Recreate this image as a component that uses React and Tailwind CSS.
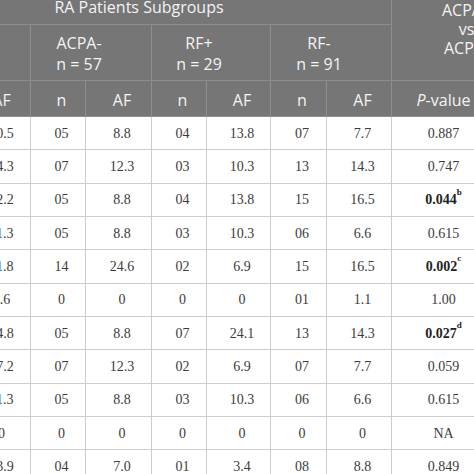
import React from 'react';

const groups = [
  { name: 'ACPA+', n: 114 },
  { name: 'ACPA-', n: 57 },
  { name: 'RF+', n: 29 },
  { name: 'RF-', n: 91 },
];

const rows = [
  ['09', '10.5', '05', '8.8', '04', '13.8', '07', '7.7', { v: '0.887' }],
  ['12', '14.3', '07', '12.3', '03', '10.3', '13', '14.3', { v: '0.747' }],
  ['14', '12.2', '05', '8.8', '04', '13.8', '15', '16.5', { v: '0.044', sup: 'b' }],
  ['06', '11.3', '05', '8.8', '03', '10.3', '06', '6.6', { v: '0.615' }],
  ['07', '11.8', '14', '24.6', '02', '6.9', '15', '16.5', { v: '0.002', sup: 'c' }],
  ['01', '0.6', '0', '0', '0', '0', '01', '1.1', { v: '1.00' }],
  ['17', '14.8', '05', '8.8', '07', '24.1', '13', '14.3', { v: '0.027', sup: 'd' }],
  ['02', '17.2', '07', '12.3', '02', '6.9', '07', '7.7', { v: '0.059' }],
  ['05', '11.3', '05', '8.8', '03', '10.3', '06', '6.6', { v: '0.615' }],
  ['0', '0', '0', '0', '0', '0', '0', '0', { v: 'NA' }],
  ['04', '13.9', '04', '7.0', '01', '3.4', '08', '8.8', { v: '0.849' }],
];

const widths = [55, 65, 55, 66, 55, 64, 56, 65, 97, 77];

export default function App() {
  const head = 'border border-[#8e8e8e] font-normal';
  const cell = 'border border-[#cdcdcd] h-[33.33px] pl-[7px] text-center align-middle';

  return (
    <div className="w-[474px] h-[474px] overflow-hidden bg-white">
      <table className="table-fixed border-collapse -ml-[90px] -mt-[22px] w-[655px]">
        <colgroup>
          {widths.map((w, i) => (
            <col key={i} style={{ width: w }} />
          ))}
        </colgroup>
        <thead className="bg-[#767676] text-[#f3f3f3] font-['Open_Sans',sans-serif] text-[16px]">
          <tr className="h-[46px]">
            <th colSpan={8} className={`${head} align-bottom pb-[7px] pr-[24px] leading-[20px]`}>
              RA Patients Subgroups
            </th>
            <th colSpan={2} rowSpan={2} className={`${head} align-middle pr-[24px] leading-[19px]`}>
              ACPA+
              <br />
              vs
              <br />
              ACPA-
            </th>
          </tr>
          <tr className="h-[56px]">
            {groups.map((g) => (
              <th key={g.name} colSpan={2} className={`${head} pr-[24px] pt-[2px] leading-[21px]`}>
                {g.name}
                <br />n = {g.n}
              </th>
            ))}
          </tr>
          <tr className="h-[36px]">
            {groups.map((g) => (
              <React.Fragment key={g.name}>
                <th className={`${head} pl-[7px] pt-[3px]`}>n</th>
                <th className={`${head} pl-[7px] pt-[3px]`}>AF</th>
              </React.Fragment>
            ))}
            <th className={`${head} pl-[7px] pt-[3px]`}>
              <i>P</i>-value
            </th>
            <th className={`${head} pl-[7px] pt-[3px]`}>OR</th>
          </tr>
        </thead>
        <tbody className="font-['Liberation_Serif',serif] text-[14px] text-[#3c3c3c]">
          {rows.map((r, i) => {
            const p = r[8];
            return (
              <tr key={i}>
                {r.slice(0, 8).map((v, j) => (
                  <td key={j} className={cell}>
                    {v}
                  </td>
                ))}
                <td className={cell}>
                  {p.sup ? (
                    <span className="font-bold text-[#222]">
                      {p.v}
                      <sup className="text-[9px] align-[5px]">{p.sup}</sup>
                    </span>
                  ) : (
                    p.v
                  )}
                </td>
                <td className={cell}></td>
              </tr>
            );
          })}
        </tbody>
      </table>
    </div>
  );
}
